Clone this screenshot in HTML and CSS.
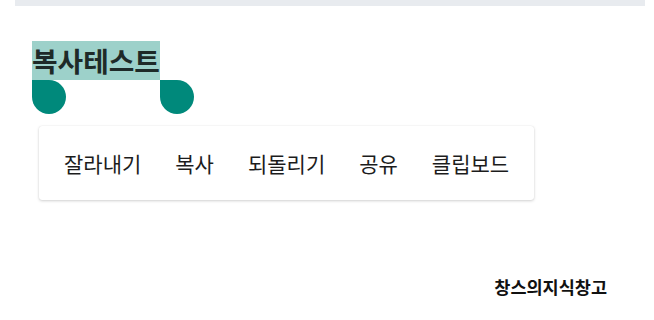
FILE: index.html
```html
<!DOCTYPE html>
<html lang="ko">
<head>
  <meta charset="UTF-8" />
  <meta name="viewport" content="width=device-width, initial-scale=1" />
  <title>복사테스트</title>
  <link rel="stylesheet" href="styles.css">
</head>
<body>

<div class="top-bar"></div>

<main>
  <h1 class="title">
    <span class="selected">복사테스트
      <span class="handle handle-left"></span>
      <span class="handle handle-right"></span>
    </span>
  </h1>

  <nav class="context-menu" aria-label="텍스트 메뉴">
    <a href="#">잘라내기</a>
    <a href="#">복사</a>
    <a href="#">되돌리기</a>
    <a href="#">공유</a>
    <a href="#">클립보드</a>
  </nav>
</main>

<footer>창스의지식창고</footer>

</body>
</html>
```

FILE: styles.css
```css
html, body {
  margin: 0;
  padding: 0;
  background: #ffffff;
  font-family: "Noto Sans CJK KR", "Noto Sans", sans-serif;
  color: #222222;
}

.top-bar {
  height: 6px;
  margin: 0 9px 0 15px;
  background: #e8ebef;
}

main {
  padding: 35px 0 0 32px;
}

.title {
  margin: 0;
  font-size: 27.8px;
  font-weight: 700;
  line-height: 39px;
}

.selected {
  position: relative;
  display: inline-block;
  background: #9dd1ca;
  color: #1e2a28;
}

/* 선택 핸들 */
.handle {
  position: absolute;
  top: 100%;
  width: 34px;
  height: 34px;
  background: #00897b;
  border-radius: 0 50% 50% 50%;
}

.handle-left {
  left: 0;
}

.handle-right {
  left: 100%;
}

.context-menu {
  display: inline-flex;
  margin: 46px 0 0 7px;
  padding: 0 8px;
  height: 74px;
  align-items: center;
  background: white;
  border-radius: 3px;
  box-shadow: 0 1px 3px rgba(0,0,0,0.18), 0 0 1px rgba(0,0,0,0.12);
}

.context-menu a {
  padding: 0 17px;
  font-size: 21px;
  color: #1c1c1c;
  text-decoration: none;
  line-height: 28px;
}

footer {
  margin-top: 74px;
  padding-right: 47px;
  text-align: right;
  font-size: 17.5px;
  font-weight: 700;
  color: #111111;
}
```
